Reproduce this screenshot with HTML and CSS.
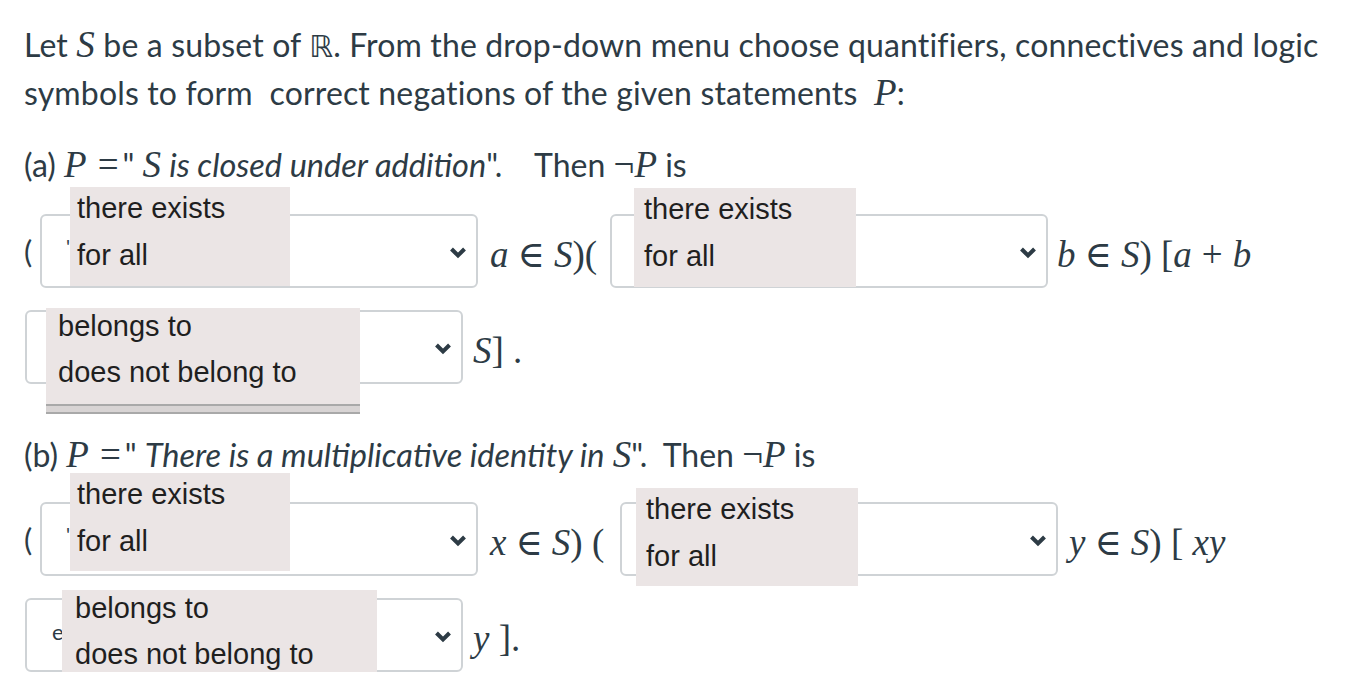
FILE: index.html
```html
<!DOCTYPE html>
<html>
<head>
<meta charset="utf-8">
<link rel="stylesheet" href="styles.css">
</head>
<body>
<div class="page">
  <p class="intro">Let <span class="m">S</span> be a subset of <span class="bb">ℝ</span>. From the drop-down menu choose quantifiers, connectives and logic symbols to form&nbsp; correct negations of the given statements &nbsp;<span class="m">P</span>:</p>

  <p class="part part-a">(a) <span class="m">P</span><span class="mu eq">=</span>" <span class="m">S</span> <em>is closed under addition</em>".&nbsp;&nbsp;&nbsp; Then <span class="mu">¬</span><span class="m">P</span> is</p>

  <div class="row row-1">
    <span class="paren">(</span>
    <div class="sel">
      <span class="peek">'</span>
      <svg class="chev" viewBox="0 0 18 13" width="18" height="13"><path d="M2.5 3 L9 9.5 L15.5 3" fill="none" stroke="#2d3b45" stroke-width="4"/></svg>
      <ul class="lb lb-q1"><li>there exists</li><li>for all</li></ul>
    </div>
    <span class="math t1"><span class="m">a</span><span class="mu rel">∈</span><span class="m">S</span><span class="mu">)(</span></span>
    <div class="sel">
      <svg class="chev" viewBox="0 0 18 13" width="18" height="13"><path d="M2.5 3 L9 9.5 L15.5 3" fill="none" stroke="#2d3b45" stroke-width="4"/></svg>
      <ul class="lb lb-q2"><li>there exists</li><li>for all</li></ul>
    </div>
    <span class="math t2"><span class="m">b</span><span class="mu rel">∈</span><span class="m">S</span><span class="mu">) [</span><span class="m">a</span><span class="mu bin">+</span><span class="m">b</span></span>
  </div>

  <div class="row row-2">
    <div class="sel">
      <span class="peek peek-low">'</span>
      <svg class="chev" viewBox="0 0 18 13" width="18" height="13"><path d="M2.5 3 L9 9.5 L15.5 3" fill="none" stroke="#2d3b45" stroke-width="4"/></svg>
      <ul class="lb lb-m1"><li>belongs to</li><li>does not belong to</li></ul>
    </div>
    <span class="math t3"><span class="m">S</span><span class="mu">] .</span></span>
  </div>

  <p class="part part-b">(b) <span class="m">P</span><span class="mu eq">=</span>" <em>There is a multiplicative identity in</em> <span class="m">S</span>".&nbsp; Then <span class="mu">¬</span><span class="m">P</span> is</p>

  <div class="row row-3">
    <span class="paren">(</span>
    <div class="sel">
      <span class="peek">'</span>
      <svg class="chev" viewBox="0 0 18 13" width="18" height="13"><path d="M2.5 3 L9 9.5 L15.5 3" fill="none" stroke="#2d3b45" stroke-width="4"/></svg>
      <ul class="lb lb-q3"><li>there exists</li><li>for all</li></ul>
    </div>
    <span class="math t4"><span class="m">x</span><span class="mu rel">∈</span><span class="m">S</span><span class="mu">) (</span></span>
    <div class="sel sel-5">
      <svg class="chev" viewBox="0 0 18 13" width="18" height="13"><path d="M2.5 3 L9 9.5 L15.5 3" fill="none" stroke="#2d3b45" stroke-width="4"/></svg>
      <ul class="lb lb-q4"><li>there exists</li><li>for all</li></ul>
    </div>
    <span class="math t5"><span class="m">y</span><span class="mu rel">∈</span><span class="m">S</span><span class="mu">) [ </span><span class="m">x</span><span class="m">y</span></span>
  </div>

  <div class="row row-4">
    <div class="sel">
      <span class="peek peek-e">e</span>
      <svg class="chev" viewBox="0 0 18 13" width="18" height="13"><path d="M2.5 3 L9 9.5 L15.5 3" fill="none" stroke="#2d3b45" stroke-width="4"/></svg>
      <ul class="lb lb-m2"><li>belongs to</li><li>does not belong to</li></ul>
    </div>
    <span class="math t6"><span class="m">y</span><span class="mu"> ].</span></span>
  </div>
</div>
</body>
</html>
```

FILE: styles.css
```css
html, body {
  margin: 0;
  padding: 0;
  background: #ffffff;
  overflow: hidden;
}
.page {
  padding: 21px 0 0 24px;
  font-family: Lato, "Open Sans", sans-serif;
  font-size: 32px;
  line-height: 48px;
  color: #2d3b45;
}
p { margin: 0; }
.intro { width: 1320px; letter-spacing: 0.15px; }
.part-a { margin-top: 24px; }
.part-b { margin-top: 47px; }
em { font-style: italic; font-size: 32.5px; }
.m {
  font-family: "Liberation Serif", "DejaVu Serif", serif;
  font-style: italic;
  font-size: 37px;
  line-height: 1;
}
.mu {
  font-family: "Liberation Serif", "DejaVu Serif", serif;
  font-size: 37px;
  line-height: 1;
}
.rel { margin: 0 9px; }
.eq { margin: 0 4px 0 11px; }
.bin { margin: 0 10px; }
.bb {
  font-family: "DejaVu Sans", sans-serif;
  font-size: 30px;
  line-height: 1;
}
.row {
  display: flex;
  align-items: center;
  height: 74px;
}
.row-1 { margin-top: 25px; }
.row-2 { margin-top: 22px; }
.row-3 { margin-top: 23px; }
.row-4 { margin-top: 22px; }
.row-2, .row-4 { margin-left: 1px; }
.paren { width: 16px; font-size: 31px; }
.sel {
  position: relative;
  box-sizing: border-box;
  width: 438px;
  height: 74px;
  border: 2px solid #cfd3d6;
  border-radius: 6px;
  background: #fff;
  flex: none;
}
.chev {
  position: absolute;
  right: 9px;
  top: 30px;
}
.peek {
  position: absolute;
  left: 24px;
  top: 20px;
  font-size: 20px;
  line-height: 20px;
  color: #2d3b45;
}
.peek-low { left: 19px; top: 36px; }
.peek-e { left: 25px; top: 22px; font-size: 22px; font-family: Lato, sans-serif; }
.math {
  white-space: pre;
  line-height: 40px;
  position: relative;
  top: 4px;
}
.t1 { margin-left: 12px; width: 120px; }
.t2 { margin-left: 9px; }
.t3 { margin-left: 10px; }
.t4 { margin-left: 12px; width: 130px; }
.t5 { margin-left: 11px; }
.t6 { margin-left: 10px; }
.lb {
  position: absolute;
  margin: 0;
  padding: 0;
  list-style: none;
  background: #ebe5e5;
  font-family: "Liberation Sans", Arial, sans-serif;
  font-size: 29px;
  line-height: 47px;
  color: #1f1f1f;
  z-index: 2;
}
.lb li { padding-left: 7px; white-space: nowrap; position: relative; top: -2px; }
.lb-q1 { left: 28px; top: -29px; width: 220px; height: 99px; }
.lb-q2 { left: 22px; top: -28px; width: 222px; height: 99px; }
.lb-q2 li { padding-left: 10px; }
.lb-q3 { left: 28px; top: -31px; width: 220px; height: 98px; }
.lb-q4 { left: 14px; top: -16px; width: 222px; height: 98px; }
.lb-q4 li { padding-left: 10px; }
.lb-m1 {
  left: 19px; top: -4px; width: 314px; height: 98px;
  border-bottom: 6px solid #d8d4d4;
  box-shadow: inset 0 -2px 0 #a9a9a9, 0 2px 0 #a9a9a9;
}
.lb-m1 li { padding-left: 12px; line-height: 46px; top: -5px; }
.lb-m2 { left: 35px; top: -10px; width: 315px; height: 96px; }
.lb-m2 li { padding-left: 13px; line-height: 46px; top: -5px; }
```
